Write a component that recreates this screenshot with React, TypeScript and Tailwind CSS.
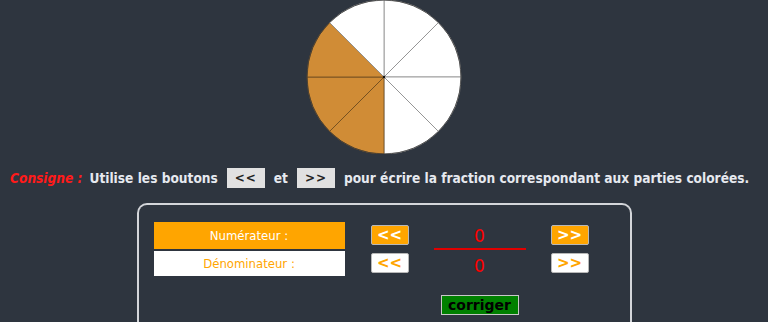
import React from 'react';

const comic = {
  fontFamily: '"Comic Sans MS", "DejaVu Sans Condensed", "DejaVu Sans", sans-serif',
  fontStretch: 'condensed',
};

const CX = 78;
const CY = 77;
const R = 77;

const point = (deg: number) => {
  const rad = (deg * Math.PI) / 180;
  return [CX + R * Math.sin(rad), CY - R * Math.cos(rad)];
};

const slicePath = (from: number, to: number) => {
  const [x1, y1] = point(from);
  const [x2, y2] = point(to);
  return `M${CX} ${CY} L${x1.toFixed(2)} ${y1.toFixed(2)} A${R} ${R} 0 0 1 ${x2.toFixed(2)} ${y2.toFixed(2)} Z`;
};

const colored = [4, 5, 6];

const Pie: React.FC = () => (
  <svg width="156" height="154" viewBox="0 0 156 154" className="shrink-0">
    {Array.from({ length: 8 }).map((_, i) => {
      const isColored = colored.includes(i);
      return (
        <path
          key={i}
          d={slicePath(i * 45, (i + 1) * 45)}
          fill={isColored ? '#d08c36' : '#ffffff'}
          stroke={isColored ? '#6b4a1e' : '#8a8a8a'}
          strokeWidth="0.8"
        />
      );
    })}
    <circle cx={CX} cy={CY} r={R} fill="none" stroke="#3a3a3a" strokeWidth="0.8" />
    <circle cx={CX} cy={CY} r="1.2" fill="#111" />
  </svg>
);

const SmallBtn: React.FC<{ children: React.ReactNode }> = ({ children }) => (
  <span className="inline-flex items-center justify-center w-[38px] h-[20px] bg-[#e1e1e1] text-[#222] text-[12px] font-bold mx-[9px] font-['DejaVu_Sans',sans-serif] tracking-[1px] [font-stretch:normal]">
    {children}
  </span>
);

const ArrowBtn: React.FC<{ children: React.ReactNode; filled?: boolean }> = ({
  children,
  filled,
}) => (
  <button
    className={
      filled
        ? 'w-[38px] h-[20px] flex items-center justify-center bg-[#ffa500] text-white border border-[#b8b8b8] rounded-[2px] text-[15px] font-bold leading-none font-["DejaVu_Sans",sans-serif]'
        : 'w-[38px] h-[20px] flex items-center justify-center bg-white text-[#ffa500] border border-[#b8b8b8] rounded-[2px] text-[15px] font-bold leading-none font-["DejaVu_Sans",sans-serif]'
    }
  >
    {children}
  </button>
);

export default function App() {
  return (
    <div className="w-[768px] h-[322px] overflow-hidden bg-[#2e353f] flex flex-col items-center">
      <Pie />

      <p
        className="mt-[12px] h-[24px] flex items-center text-[13.6px] font-bold text-[#e6e9ef] whitespace-nowrap self-start pl-[10px]"
        style={comic}
      >
        <span className="text-[#ff1a1a] italic">Consigne :</span>
        <span className="ml-[7px]">Utilise les boutons</span>
        <SmallBtn>&lt;&lt;</SmallBtn>
        <span>et</span>
        <SmallBtn>&gt;&gt;</SmallBtn>
        <span>pour écrire la fraction correspondant aux parties colorées.</span>
      </p>

      <div className="mt-[13px] w-[495px] flex-1 border-2 border-b-0 border-[#d4d6da] rounded-t-[10px] pt-[17px] pl-[15px]">
        <div className="flex">
          <div className="w-[191px] flex flex-col gap-[2px]" style={comic}>
            <div className="h-[27px] bg-[#ffa500] text-white text-[13px] flex items-center justify-center">
              Numérateur :
            </div>
            <div className="h-[25px] bg-white text-[#ffa500] text-[13px] flex items-center justify-center">
              Dénominateur :
            </div>
          </div>

          <div className="ml-[26px] pt-[3px] flex flex-col gap-[8px]">
            <ArrowBtn filled>&lt;&lt;</ArrowBtn>
            <ArrowBtn>&lt;&lt;</ArrowBtn>
          </div>

          <div className="ml-[25px] w-[92px] flex flex-col items-center font-['DejaVu_Sans',sans-serif] text-[#ff0000] text-[17px] leading-none">
            <span className="pt-[6px] h-[26px]">0</span>
            <span className="w-full h-[2px] bg-[#e00000]" />
            <span className="pt-[8px]">0</span>
          </div>

          <div className="ml-[25px] pt-[3px] flex flex-col gap-[8px]">
            <ArrowBtn filled>&gt;&gt;</ArrowBtn>
            <ArrowBtn>&gt;&gt;</ArrowBtn>
          </div>
        </div>

        <div className="mt-[19px] pl-[287px]">
          <button className="w-[78px] h-[20px] bg-[#008000] border border-[#c8c8c8] text-black text-[14px] font-bold leading-none flex items-center justify-center font-['DejaVu_Sans',sans-serif]">
            corriger
          </button>
        </div>
      </div>
    </div>
  );
}
